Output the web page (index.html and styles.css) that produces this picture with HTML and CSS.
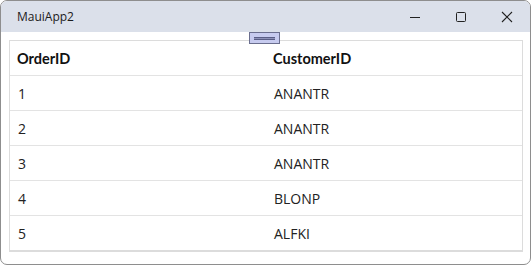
FILE: index.html
```html
<!DOCTYPE html>
<html>
<head>
<meta charset="utf-8">
<link rel="stylesheet" href="styles.css">
</head>
<body>
<div class="window">
  <div class="titlebar">
    <span class="title">MauiApp2</span>
    <div class="controls">
      <span class="ctl"><svg width="12" height="12" viewBox="0 0 12 12"><path d="M1 6.5h10" stroke="#222" stroke-width="1"/></svg></span>
      <span class="ctl"><svg width="12" height="12" viewBox="0 0 12 12"><rect x="1.5" y="1.5" width="9" height="9" rx="1" fill="none" stroke="#222" stroke-width="1"/></svg></span>
      <span class="ctl"><svg width="12" height="12" viewBox="0 0 12 12"><path d="M1 1L11 11M11 1L1 11" stroke="#222" stroke-width="1.1"/></svg></span>
    </div>
  </div>
  <div class="content">
    <div class="handle"><span></span></div>
    <div class="grid">
      <div class="row head"><div class="c1">OrderID</div><div class="c2">CustomerID</div></div>
      <div class="row"><div class="c1">1</div><div class="c2">ANANTR</div></div>
      <div class="row"><div class="c1">2</div><div class="c2">ANANTR</div></div>
      <div class="row"><div class="c1">3</div><div class="c2">ANANTR</div></div>
      <div class="row"><div class="c1">4</div><div class="c2">BLONP</div></div>
      <div class="row last"><div class="c1">5</div><div class="c2">ALFKI</div></div>
    </div>
  </div>
</div>
</body>
</html>
```

FILE: styles.css
```css
html, body { margin: 0; padding: 0; background: #ffffff; }
body { width: 531px; height: 266px; overflow: hidden; font-family: "Segoe UI", "Open Sans", "Noto Sans", sans-serif; }
.window {
  box-sizing: border-box;
  width: 531px;
  height: 265px;
  border: 1px solid #8e8e8e;
  border-radius: 7px;
  overflow: hidden;
  display: flex;
  flex-direction: column;
  background: #fff;
}
.titlebar {
  height: 31px;
  flex: none;
  background: #dbe0ea;
  display: flex;
  align-items: center;
  justify-content: space-between;
}
.title { font-size: 12px; color: #1b1b1b; padding-left: 16px; }
.controls { display: flex; height: 100%; }
.ctl { width: 46px; display: flex; align-items: center; justify-content: center; }
.content { position: relative; flex: 1; padding: 8px 7px 15px 8px; }
.handle {
  position: absolute;
  left: 248px; top: 0;
  box-sizing: border-box;
  width: 31px; height: 12px;
  background: #c7cbef;
  border: 1px solid #6a6e8e;
  display: flex; align-items: center; justify-content: center;
}
.handle span { width: 21px; height: 3px; border-top: 1px solid #5a5e86; border-bottom: 1px solid #5a5e86; background: #8d91b8; box-sizing: border-box; }
.grid { border: 1px solid #dcdcdc; border-bottom-width: 2px; }
.row { display: flex; height: 34px; align-items: center; border-bottom: 1px solid #e3e3e3; font-size: 14px; color: #222; }
.row.last { border-bottom: none; }
.row.head { font-family: "Segoe UI", Lato, "Open Sans", sans-serif; font-weight: bold; color: #111; font-size: 14.5px; }
.c1 { width: 256px; box-sizing: border-box; }
.row.head .c1 { padding-left: 7px; }
.row.head .c2 { padding-left: 7px; }
.row:not(.head) .c1 { padding-left: 8px; }
.row:not(.head) .c2 { padding-left: 8px; }
```
